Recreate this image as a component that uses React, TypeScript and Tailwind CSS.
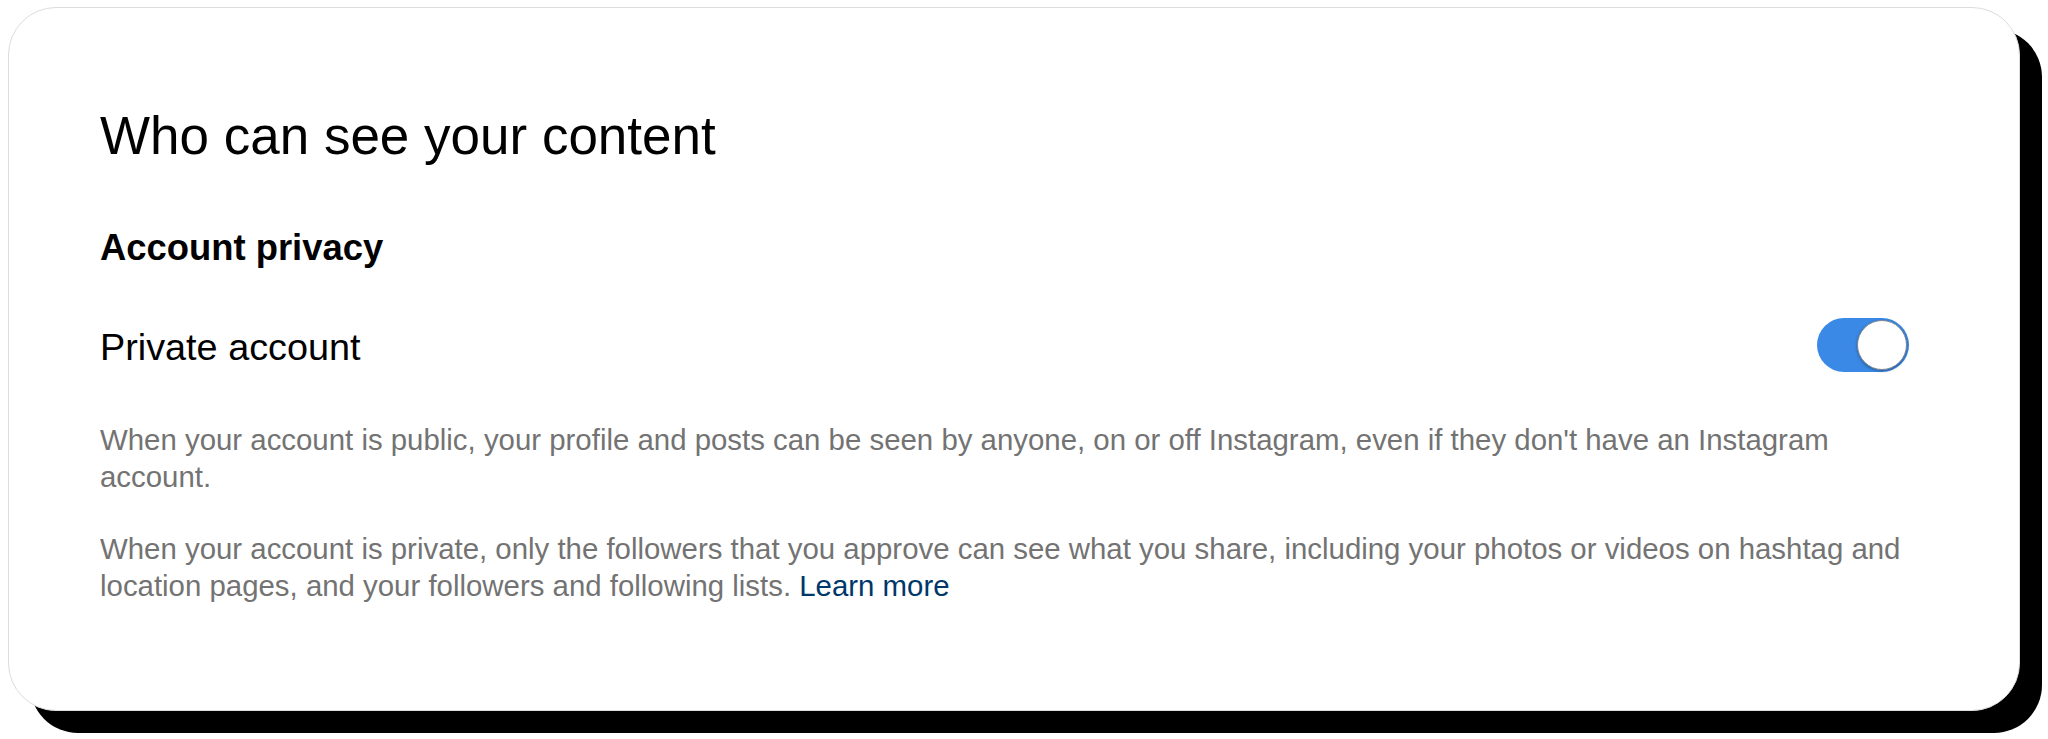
import React from "react";

function Toggle() {
  return (
    <div className="relative h-[54px] w-[92px] shrink-0 rounded-full bg-[#3a89e6]">
      <div className="absolute right-[2px] top-[2px] h-[50px] w-[50px] rounded-full border border-[#7d8894] bg-white shadow-[0_1px_3px_rgba(0,0,0,0.35)]" />
    </div>
  );
}

export default function App() {
  return (
    <div className="h-[739px] w-[2048px] bg-white pl-[8px] pt-[7px] font-['Liberation_Sans',Arial,sans-serif]">
      <div className="flex h-[704px] w-[2012px] flex-col rounded-[48px] border border-[#dcdcdc] bg-white pl-[91px] pr-[110px] pt-[96px] shadow-[22px_22px_0_0_#000]">
        <h1 className="text-[53px] font-normal leading-[64px] text-black">
          Who can see your content
        </h1>
        <h2 className="mt-[58px] text-[36.4px] font-bold leading-[44px] text-black">
          Account privacy
        </h2>
        <div className="mt-[47px] flex h-[56px] items-center justify-between">
          <span className="pt-[3px] text-[37.8px] leading-[44px] text-black">
            Private account
          </span>
          <Toggle />
        </div>
        <p className="mt-[48px] text-[29.4px] leading-[37px] text-[#737373]">
          When your account is public, your profile and posts can be seen by
          anyone, on or off Instagram, even if they don't have an Instagram
          account.
        </p>
        <p className="mt-[35px] text-[29.4px] leading-[37px] text-[#737373]">
          When your account is private, only the followers that you approve can
          see what you share, including your photos or videos on hashtag and
          location pages, and your followers and following lists.{" "}
          <a href="#" className="text-[#00376b]">
            Learn more
          </a>
        </p>
      </div>
    </div>
  );
}
